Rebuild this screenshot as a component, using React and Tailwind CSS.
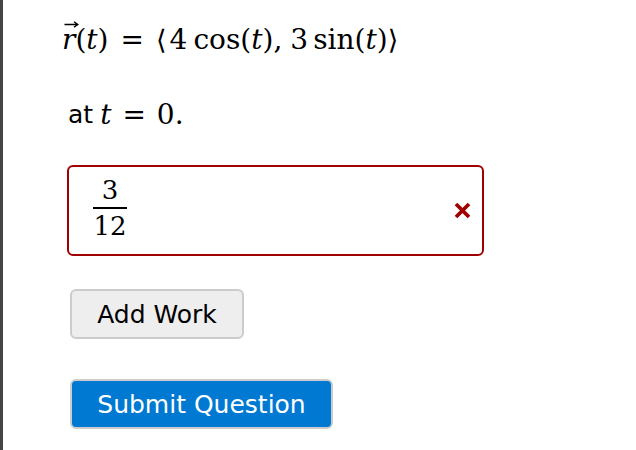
import React from "react";

function M({ children, className = "" }) {
  return (
    <span className={`font-['DejaVu_Serif','Liberation_Serif',serif] ${className}`}>{children}</span>
  );
}

function I({ children }) {
  return <span className="italic">{children}</span>;
}

export default function App() {
  return (
    <div className="w-[636px] h-[450px] bg-white border-l-[3px] border-[#444] overflow-hidden">
      <div className="pl-[59px] pt-[22px]">
        <div className="text-[28px] leading-[36px] text-black h-[36px] flex items-center whitespace-nowrap">
          <M>
            <span className="relative inline-block italic">
              r
              <svg
                width="15"
                height="7"
                viewBox="0 0 15 7"
                className="absolute left-[2px] top-[-1px]"
              >
                <path d="M0.5 3.5 H13.5 M10 0.8 L13.8 3.5 L10 6.2" stroke="black" strokeWidth="1.4" fill="none" />
              </svg>
            </span>
            (<I>t</I>)<span className="mx-[12px]">=</span>
            <span className="text-[27px] mr-[3px]">⟨</span>4<span className="ml-[6px]">cos</span>(<I>t</I>),
            <span className="ml-[8px]">3</span>
            <span className="ml-[5px]">sin</span>(<I>t</I>)<span className="text-[27px]">⟩</span>
          </M>
        </div>
        <div className="mt-[39px] h-[36px] flex items-center text-black pl-[6px] whitespace-nowrap">
          <span className="font-['DejaVu_Sans',sans-serif] text-[25px]">at</span>
          <M className="text-[28px] ml-[7px]">
            <I>t</I>
            <span className="mx-[11px]">=</span>0.
          </M>
        </div>
        <div className="mt-[32px] ml-[5px] w-[417px] h-[91px] border-2 border-[#a00000] rounded-[6px] flex items-center justify-between pl-[24px] pr-[11px]">
          <M className="inline-flex flex-col items-center text-[26px] leading-[26px] text-black -mt-[6px]">
            <span>3</span>
            <span className="w-[34px] h-[2px] bg-black my-[4px]"></span>
            <span>12</span>
          </M>
          <svg width="17" height="17" viewBox="0 0 17 17">
            <path d="M2 2 L15 15 M15 2 L2 15" stroke="#a00000" strokeWidth="3.8" strokeLinecap="butt" />
          </svg>
        </div>
        <div className="mt-[33px] ml-[8px]">
          <button className="h-[50px] w-[174px] pt-[2px] bg-[#eeeeee] border-2 border-[#cccccc] rounded-[6px] text-[25px] text-black font-['DejaVu_Sans',sans-serif]">
            Add Work
          </button>
        </div>
        <div className="mt-[40px] ml-[8px]">
          <button className="h-[50px] w-[263px] pt-[2px] bg-[#0079d2] border-2 border-[#cccccc] rounded-[6px] text-[25px] text-white font-['DejaVu_Sans',sans-serif]">
            Submit Question
          </button>
        </div>
      </div>
    </div>
  );
}
